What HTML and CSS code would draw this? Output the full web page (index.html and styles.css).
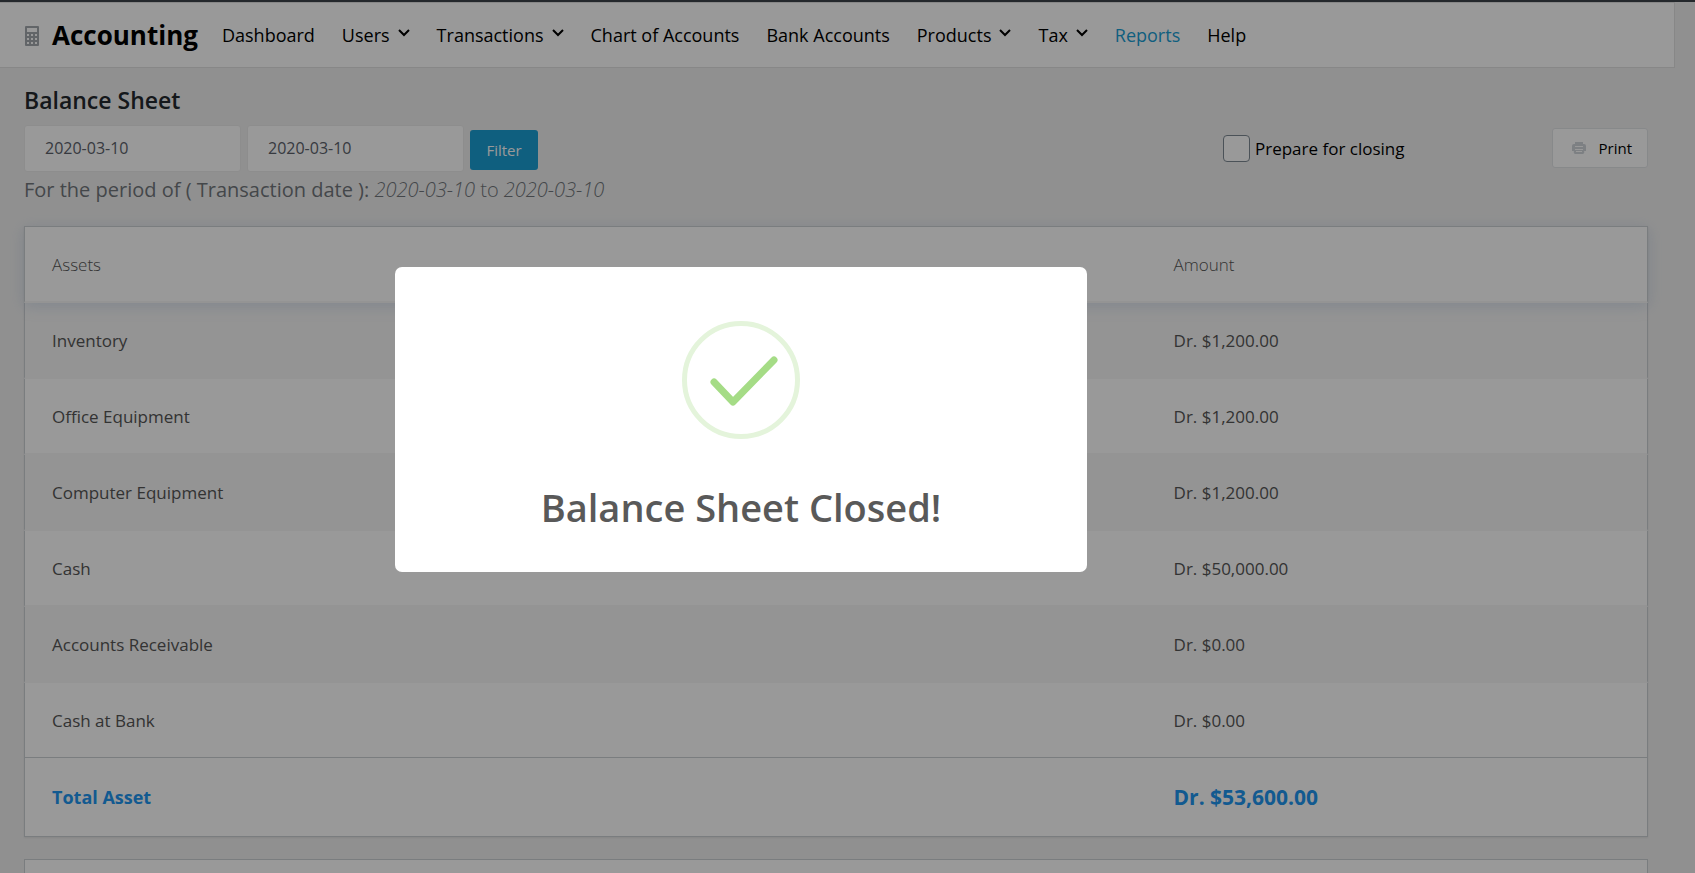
FILE: index.html
```html
<!DOCTYPE html>
<html lang="en">
<head>
    <meta charset="UTF-8">
    <title>Balance Sheet - Accounting</title>
    <link rel="stylesheet" href="styles.css">
</head>
<body>
    <div class="admin-bar"></div>

    <header class="erp-nav">
        <svg class="calc-icon" viewBox="0 0 14 20" width="14" height="20">
            <path fill="#a3a8ad" fill-rule="evenodd" d="M1 0h12a1 1 0 0 1 1 1v18a1 1 0 0 1-1 1H1a1 1 0 0 1-1-1V1a1 1 0 0 1 1-1zM2 2v4h10V2zM2 8v2h2V8zM6 8v2h2V8zM10 8v2h2V8zM2 12v2h2v-2zM6 12v2h2v-2zM10 12v2h2v-2zM2 16v2h2v-2zM6 16v2h2v-2zM10 16v2h2v-2z"/>
        </svg>
        <h1>Accounting</h1>
        <nav>
            <a href="#">Dashboard</a>
            <a href="#">Users <svg class="caret" viewBox="0 0 12 8"><path d="M1 1l5 5 5-5"/></svg></a>
            <a href="#">Transactions <svg class="caret" viewBox="0 0 12 8"><path d="M1 1l5 5 5-5"/></svg></a>
            <a href="#">Chart of Accounts</a>
            <a href="#">Bank Accounts</a>
            <a href="#">Products <svg class="caret" viewBox="0 0 12 8"><path d="M1 1l5 5 5-5"/></svg></a>
            <a href="#">Tax <svg class="caret" viewBox="0 0 12 8"><path d="M1 1l5 5 5-5"/></svg></a>
            <a href="#" class="active">Reports</a>
            <a href="#">Help</a>
        </nav>
    </header>

    <main class="report">
        <h2>Balance Sheet</h2>

        <div class="toolbar">
            <form class="filter-form">
                <input type="text" class="date-field" value="2020-03-10" aria-label="Start date">
                <input type="text" class="date-field" value="2020-03-10" aria-label="End date">
                <button type="button" class="btn-filter">Filter</button>
            </form>
            <div class="closing">
                <input type="checkbox" id="closing">
                <label for="closing">Prepare for closing</label>
            </div>
            <button type="button" class="btn-print">
                <svg viewBox="0 0 14 12" width="14" height="12">
                    <path fill="#d0d5da" fill-rule="evenodd" d="M3 0h8v2h1a2 2 0 0 1 2 2v5h-2a2 2 0 0 1-2 3H4a2 2 0 0 1-2-3H0V4a2 2 0 0 1 2-2h1zM3 4v1h8V4zM3 7v1h8V7zM4 9v1h6V9z"/>
                </svg>
                Print
            </button>
        </div>

        <p class="period">For the period of ( Transaction date ): <span><em>2020-03-10</em> to <em>2020-03-10</em></span></p>

        <table class="sheet">
            <thead>
                <tr><th>Assets</th><th>Amount</th></tr>
            </thead>
            <tbody>
                <tr><td>Inventory</td><td>Dr. $1,200.00</td></tr>
                <tr><td>Office Equipment</td><td>Dr. $1,200.00</td></tr>
                <tr><td>Computer Equipment</td><td>Dr. $1,200.00</td></tr>
                <tr><td>Cash</td><td>Dr. $50,000.00</td></tr>
                <tr><td>Accounts Receivable</td><td>Dr. $0.00</td></tr>
                <tr><td>Cash at Bank</td><td>Dr. $0.00</td></tr>
            </tbody>
            <tfoot>
                <tr><td>Total Asset</td><td class="total">Dr. $53,600.00</td></tr>
            </tfoot>
        </table>

        <div class="next-sheet"></div>
    </main>

    <div class="overlay">
        <div class="modal" role="dialog" aria-labelledby="modalTitle">
            <svg class="success-icon" viewBox="0 0 118 118" width="118" height="118">
                <circle cx="59" cy="59" r="56.5" fill="none" stroke="#e4f4db" stroke-width="5"/>
                <path d="M32 61l19 20 41-42" fill="none" stroke="#a5dc86" stroke-width="7" stroke-linecap="round" stroke-linejoin="round"/>
            </svg>
            <h2 id="modalTitle">Balance Sheet Closed!</h2>
        </div>
    </div>
</body>
</html>
```
FILE: styles.css
```css
* {
    box-sizing: border-box;
}
html {
    overflow: hidden;
}
body {
    margin: 0;
    height: 100vh;
    overflow: hidden;
    background: #f1f1f1;
    color: #000;
    font-family: "Segoe UI", "Open Sans", "Noto Sans", sans-serif;
    font-size: 17px;
}
.admin-bar {
    height: 2px;
    background: #3c434a;
}
.erp-nav {
    display: flex;
    align-items: center;
    height: 66px;
    margin-right: 20px;
    padding: 0 25px;
    background: #fff;
    border: 1px solid #e2e2e2;
    border-left: 0;
}
.calc-icon {
    margin: 2px 13px 0 0;
}
.erp-nav h1 {
    margin: 0 24px 0 0;
    font-size: 26px;
    line-height: 32px;
    font-weight: 700;
}
.erp-nav nav {
    display: flex;
    gap: 27px;
    font-size: 18px;
}
.erp-nav a {
    display: flex;
    gap: 8px;
    color: #000;
    line-height: 24px;
    text-decoration: none;
    white-space: nowrap;
}
.erp-nav a.active {
    color: #1a9ed4;
}
.caret {
    width: 12px;
    height: 8px;
    margin-top: 6px;
    fill: none;
    stroke: #000;
    stroke-width: 2;
}
.report {
    padding: 16px 47px 0 24px;
}
.report h2 {
    margin: 0;
    color: #23282d;
    font-size: 23px;
    line-height: 32px;
    font-weight: 600;
}
.toolbar {
    display: flex;
    align-items: center;
    height: 48px;
    margin-top: 8px;
}
.filter-form {
    display: flex;
    align-items: center;
    gap: 6px;
    margin-right: auto;
}
.date-field {
    width: 217px;
    height: 47px;
    padding: 0 20px;
    border: 1px solid #ececec;
    border-radius: 3px;
    background: #fff;
    color: #5c626b;
    font: inherit;
    font-size: 16px;
}
.btn-filter {
    width: 68px;
    height: 40px;
    margin-top: 4px;
    border: 0;
    border-radius: 3px;
    background: #1a9ed4;
    color: #fff;
    font: inherit;
    font-size: 15px;
}
.closing {
    display: flex;
    align-items: center;
    gap: 5px;
    margin-right: 147px;
}
.closing input {
    appearance: none;
    width: 27px;
    height: 27px;
    margin: 0;
    border: 1px solid #7e8993;
    border-radius: 4px;
    background: #fff;
}
.btn-print {
    display: flex;
    align-items: center;
    gap: 13px;
    height: 40px;
    padding: 0 15px 0 19px;
    border: 1px solid #e2e4e7;
    border-radius: 3px;
    background: #fff;
    color: #000;
    font: inherit;
    font-size: 15px;
}
.period {
    margin: 2px 0 20px;
    color: #72777c;
    font-size: 20px;
    line-height: 32px;
}
.period span {
    font-weight: 300;
}
.sheet {
    width: 100%;
    background: #fff;
    border-collapse: separate;
    border-spacing: 0;
    table-layout: fixed;
    box-shadow: 0 1px 2px rgba(0, 0, 0, 0.08);
}
.sheet th,
.sheet td {
    height: 76px;
    padding: 0 27px;
    border-bottom: 2px solid #f7f7f7;
    color: #555;
    text-align: left;
}
.sheet th {
    width: 69%;
    height: 77px;
    border-top: 1px solid #ccd0d4;
    font-weight: 300;
}
.sheet th + th {
    width: 31%;
}
.sheet tr > :first-child {
    border-left: 1px solid #ccd0d4;
}
.sheet tr > :last-child {
    padding-left: 29px;
    border-right: 1px solid #ccd0d4;
}
.sheet thead {
    position: relative;
    z-index: 1;
    box-shadow: 0 3px 14px rgba(120, 155, 205, 0.25);
}
.sheet tbody tr:nth-child(odd) {
    background: #f7f7f7;
}
.sheet tbody tr:last-child td {
    height: 74px;
    border-bottom: 0;
}
.sheet tfoot td {
    height: 80px;
    border-top: 1px solid #ccd0d4;
    border-bottom: 1px solid #ccd0d4;
    color: #1e96f0;
    font-size: 18px;
    font-weight: 700;
}
.sheet tfoot .total {
    font-size: 21px;
}
.next-sheet {
    height: 76px;
    margin-top: 22px;
    border: 1px solid #ccd0d4;
    background: #fff;
}
.overlay {
    position: fixed;
    inset: 0;
    z-index: 10;
    display: flex;
    align-items: center;
    justify-content: center;
    padding: 0 213px 34px 0;
    background: rgba(0, 0, 0, 0.4);
}
.modal {
    display: flex;
    flex-direction: column;
    align-items: center;
    width: 692px;
    padding: 54px 20px 40px;
    border-radius: 7px;
    background: #fff;
}
.modal h2 {
    margin: 44px 0 0;
    color: #595959;
    font-size: 38px;
    line-height: 49px;
    font-weight: 600;
}
```
